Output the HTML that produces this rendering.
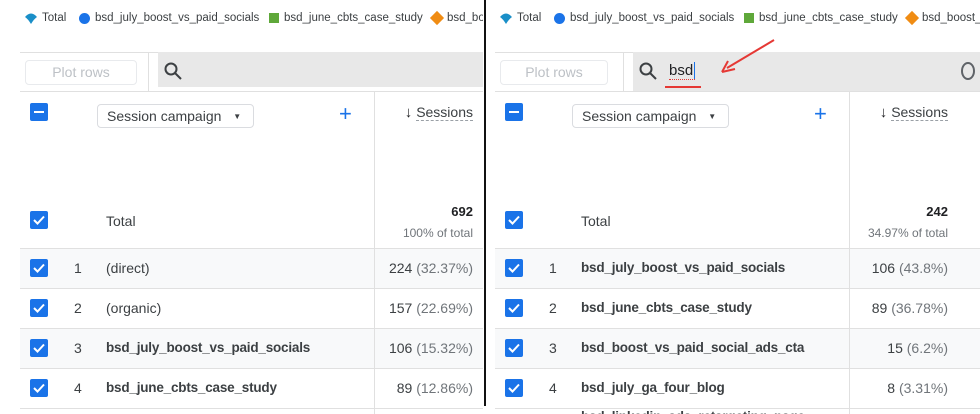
<!DOCTYPE html>
<html><head><meta charset="utf-8"><style>
*{margin:0;padding:0;box-sizing:border-box}
body{width:980px;height:414px;background:#fff;font-family:"Liberation Sans",sans-serif;color:#202124;position:relative;overflow:hidden}
.pn{position:absolute;top:0;height:414px;overflow:hidden}
.in{position:absolute;top:0;width:520px;height:414px;overflow:hidden}
.a{position:absolute;white-space:nowrap}
.lg{font-size:11.5px;color:#3c4043;top:12px}
.cb{position:absolute;width:18px;height:18px;background:#1a73e8;border-radius:2px}
.cb svg{position:absolute;left:0;top:0}
.row{position:absolute;left:20px;width:500px;height:40px;border-top:1px solid #e0e0e0}
.g{background:#f8f9fa}
.num{font-size:14px;color:#3c4043}
.nm{font-size:13.5px;font-weight:bold;color:#3c4043;letter-spacing:-0.2px}
.nn{font-size:14px;color:#3c4043}
.idx{font-size:14px;color:#3c4043}
.pc{color:#70757a}
</style></head><body>

<div class="pn" style="left:0;width:483px"><div class="in" style="left:0">
  <svg class="a" style="left:24px;top:11px" width="14" height="14"><path d="M1 6 Q7 -1 13 6 Q10 8 7 13 Q4 8 1 6Z" fill="#1a8fc8"/></svg>
  <div class="a lg" style="left:42px">Total</div>
  <div class="a" style="left:79px;top:13px;width:11px;height:11px;border-radius:50%;background:#1a73e8"></div>
  <div class="a lg" style="left:95px">bsd_july_boost_vs_paid_socials</div>
  <div class="a" style="left:269px;top:13px;width:10px;height:10px;background:#5fa83a"></div>
  <div class="a lg" style="left:284px">bsd_june_cbts_case_study</div>
  <div class="a" style="left:432px;top:13px;width:10px;height:10px;background:#f08c13;transform:rotate(45deg)"></div>
  <div class="a lg" style="left:447px">bsd_boost_vs_paid</div>
  <div class="a" style="left:20px;top:52px;width:500px;height:1px;background:#e0e0e0"></div>
  <div class="a" style="left:20px;top:91px;width:500px;height:1px;background:#e0e0e0"></div>
  <div class="a" style="left:148px;top:52px;width:1px;height:39px;background:#e0e0e0"></div>
  <div class="a" style="left:25px;top:60px;width:112px;height:25px;border:1px solid #e8eaed;border-radius:4px;color:#bdc1c6;font-size:14px;text-align:center;line-height:23px">Plot rows</div>
  <div class="a" style="left:158px;top:52px;width:362px;height:35px;background:#e8e8e8"></div>
  <svg class="a" style="left:163px;top:61px" width="20" height="20"><circle cx="8" cy="8" r="5.5" stroke="#3c4043" stroke-width="2" fill="none"/><path d="M12 12 L18 18" stroke="#3c4043" stroke-width="2"/></svg>
  <div class="cb" style="left:30px;top:103px"><svg width="18" height="18"><rect x="4" y="8" width="10" height="2" fill="#fff"/></svg></div>
  <div class="a" style="left:97px;top:104px;width:157px;height:24px;border:1px solid #dadce0;border-radius:4px;font-size:14px;color:#3c4043;line-height:22px;padding-left:9px">Session campaign <span style="font-size:8px;margin-left:8px;vertical-align:2px">▼</span></div>
  <div class="a" style="left:339px;top:103px;font-size:22px;color:#1a73e8;line-height:22px">+</div>
  <div class="a" style="right:47px;top:104px;font-size:14px;color:#202124"><b style="font-size:15px">↓</b> <span style="color:#3c4043;border-bottom:1px dashed #9aa0a6">Sessions</span></div>
  <div class="cb" style="left:30px;top:211px"><svg width="18" height="18"><path d="M4 9 L7.5 12.5 L14 5.5" stroke="#fff" stroke-width="2" fill="none"/></svg></div>
  <div class="a" style="left:106px;top:213px;font-size:14px;color:#3c4043">Total</div>
  <div class="row g" style="top:248px"></div>
  <div class="row" style="top:288px"></div>
  <div class="row g" style="top:328px"></div>
  <div class="row" style="top:368px"></div>
  <div class="row" style="top:408px;height:6px"></div>
  <div class="a" style="left:374px;top:91px;width:1px;height:323px;background:#e0e0e0"></div>
  <div class="a" style="right:47px;top:204px;font-size:13px;font-weight:bold;color:#202124">692</div>
  <div class="a" style="right:47px;top:226px;font-size:12px;color:#70757a">100% of total</div>
  <div class="cb" style="left:30px;top:259px"><svg width="18" height="18"><path d="M4 9 L7.5 12.5 L14 5.5" stroke="#fff" stroke-width="2" fill="none"/></svg></div>
  <div class="cb" style="left:30px;top:299px"><svg width="18" height="18"><path d="M4 9 L7.5 12.5 L14 5.5" stroke="#fff" stroke-width="2" fill="none"/></svg></div>
  <div class="cb" style="left:30px;top:339px"><svg width="18" height="18"><path d="M4 9 L7.5 12.5 L14 5.5" stroke="#fff" stroke-width="2" fill="none"/></svg></div>
  <div class="cb" style="left:30px;top:379px"><svg width="18" height="18"><path d="M4 9 L7.5 12.5 L14 5.5" stroke="#fff" stroke-width="2" fill="none"/></svg></div>
  <div class="a idx" style="left:74px;top:260px">1</div><div class="a nn" style="left:106px;top:260px">(direct)</div><div class="a num" style="right:47px;top:260px">224 <span class="pc">(32.37%)</span></div>
  <div class="a idx" style="left:74px;top:300px">2</div><div class="a nn" style="left:106px;top:300px">(organic)</div><div class="a num" style="right:47px;top:300px">157 <span class="pc">(22.69%)</span></div>
  <div class="a idx" style="left:74px;top:340px">3</div><div class="a nm" style="left:106px;top:340px">bsd_july_boost_vs_paid_socials</div><div class="a num" style="right:47px;top:340px">106 <span class="pc">(15.32%)</span></div>
  <div class="a idx" style="left:74px;top:380px">4</div><div class="a nm" style="left:106px;top:380px">bsd_june_cbts_case_study</div><div class="a num" style="right:47px;top:380px">89 <span class="pc">(12.86%)</span></div>
</div></div>
<div class="a" style="left:484px;top:0;width:2px;height:406px;background:#111"></div>

<div class="pn" style="left:488px;width:492px"><div class="in" style="left:-13px;width:505px">
  <svg class="a" style="left:24px;top:11px" width="14" height="14"><path d="M1 6 Q7 -1 13 6 Q10 8 7 13 Q4 8 1 6Z" fill="#1a8fc8"/></svg>
  <div class="a lg" style="left:42px">Total</div>
  <div class="a" style="left:79px;top:13px;width:11px;height:11px;border-radius:50%;background:#1a73e8"></div>
  <div class="a lg" style="left:95px">bsd_july_boost_vs_paid_socials</div>
  <div class="a" style="left:269px;top:13px;width:10px;height:10px;background:#5fa83a"></div>
  <div class="a lg" style="left:284px">bsd_june_cbts_case_study</div>
  <div class="a" style="left:432px;top:13px;width:10px;height:10px;background:#f08c13;transform:rotate(45deg)"></div>
  <div class="a lg" style="left:447px">bsd_boost_vs_paid</div>
  <div class="a" style="left:20px;top:52px;width:500px;height:1px;background:#e0e0e0"></div>
  <div class="a" style="left:20px;top:91px;width:500px;height:1px;background:#e0e0e0"></div>
  <div class="a" style="left:148px;top:52px;width:1px;height:39px;background:#e0e0e0"></div>
  <div class="a" style="left:25px;top:60px;width:108px;height:25px;border:1px solid #e8eaed;border-radius:4px;color:#bdc1c6;font-size:14px;text-align:center;line-height:23px">Plot rows</div>
  <div class="a" style="left:158px;top:52px;width:362px;height:39px;background:#e8e8e8"></div>
  <svg class="a" style="left:163px;top:61px" width="20" height="20"><circle cx="8" cy="8" r="5.5" stroke="#3c4043" stroke-width="2" fill="none"/><path d="M12 12 L18 18" stroke="#3c4043" stroke-width="2"/></svg>
  <div class="a" style="left:194px;top:63px;font-size:15px;color:#202124;border-bottom:1px dotted #e53935;line-height:16px">bsd<span style="border-left:1px solid #1a73e8;margin-left:1px"></span></div>
  <div class="a" style="left:190px;top:86px;width:36px;height:2px;background:#e53935"></div>
  <div class="a" style="left:486px;top:62px;width:14px;height:18px;border:2px solid #5f6368;border-radius:50%"></div>
  <div class="cb" style="left:30px;top:103px"><svg width="18" height="18"><rect x="4" y="8" width="10" height="2" fill="#fff"/></svg></div>
  <div class="a" style="left:97px;top:104px;width:157px;height:24px;border:1px solid #dadce0;border-radius:4px;font-size:14px;color:#3c4043;line-height:22px;padding-left:9px">Session campaign <span style="font-size:8px;margin-left:8px;vertical-align:2px">▼</span></div>
  <div class="a" style="left:339px;top:103px;font-size:22px;color:#1a73e8;line-height:22px">+</div>
  <div class="a" style="right:32px;top:104px;font-size:14px;color:#202124"><b style="font-size:15px">↓</b> <span style="color:#3c4043;border-bottom:1px dashed #9aa0a6">Sessions</span></div>
  <div class="cb" style="left:30px;top:211px"><svg width="18" height="18"><path d="M4 9 L7.5 12.5 L14 5.5" stroke="#fff" stroke-width="2" fill="none"/></svg></div>
  <div class="a" style="left:106px;top:213px;font-size:14px;color:#3c4043">Total</div>
  <div class="row g" style="top:248px"></div>
  <div class="row" style="top:288px"></div>
  <div class="row g" style="top:328px"></div>
  <div class="row" style="top:368px"></div>
  <div class="row" style="top:408px;height:6px"></div>
  <div class="a" style="left:374px;top:91px;width:1px;height:323px;background:#e0e0e0"></div>
  <div class="a" style="right:32px;top:204px;font-size:13px;font-weight:bold;color:#202124">242</div>
  <div class="a" style="right:32px;top:226px;font-size:12px;color:#70757a">34.97% of total</div>
  <div class="cb" style="left:30px;top:259px"><svg width="18" height="18"><path d="M4 9 L7.5 12.5 L14 5.5" stroke="#fff" stroke-width="2" fill="none"/></svg></div>
  <div class="cb" style="left:30px;top:299px"><svg width="18" height="18"><path d="M4 9 L7.5 12.5 L14 5.5" stroke="#fff" stroke-width="2" fill="none"/></svg></div>
  <div class="cb" style="left:30px;top:339px"><svg width="18" height="18"><path d="M4 9 L7.5 12.5 L14 5.5" stroke="#fff" stroke-width="2" fill="none"/></svg></div>
  <div class="cb" style="left:30px;top:379px"><svg width="18" height="18"><path d="M4 9 L7.5 12.5 L14 5.5" stroke="#fff" stroke-width="2" fill="none"/></svg></div>
  <div class="a idx" style="left:74px;top:260px">1</div><div class="a nm" style="left:106px;top:260px">bsd_july_boost_vs_paid_socials</div><div class="a num" style="right:32px;top:260px">106 <span class="pc">(43.8%)</span></div>
  <div class="a idx" style="left:74px;top:300px">2</div><div class="a nm" style="left:106px;top:300px">bsd_june_cbts_case_study</div><div class="a num" style="right:32px;top:300px">89 <span class="pc">(36.78%)</span></div>
  <div class="a idx" style="left:74px;top:340px">3</div><div class="a nm" style="left:106px;top:340px">bsd_boost_vs_paid_social_ads_cta</div><div class="a num" style="right:32px;top:340px">15 <span class="pc">(6.2%)</span></div>
  <div class="a idx" style="left:74px;top:380px">4</div><div class="a nm" style="left:106px;top:380px">bsd_july_ga_four_blog</div><div class="a num" style="right:32px;top:380px">8 <span class="pc">(3.31%)</span></div>
  <div class="a nm" style="left:106px;top:409px">bsd_linkedin_ads_retargeting_page</div>
</div></div>
<svg class="a" style="left:0;top:0" width="980" height="414"><path d="M774 40 L727 68" stroke="#e53935" stroke-width="2" fill="none"/><path d="M722 72 L735 69 M722 72 L728 61" stroke="#e53935" stroke-width="2" fill="none"/></svg>
</body></html>
